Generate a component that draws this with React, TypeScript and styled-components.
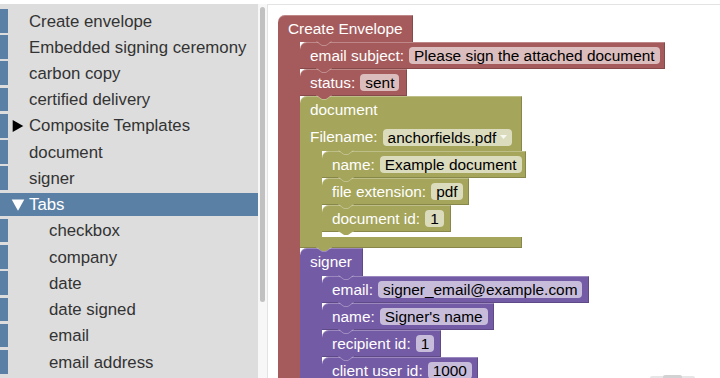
import React from "react";
import styled, { createGlobalStyle } from "styled-components";

type Hue = { base: string; field: string };

const red: Hue = { base: "#a55b5b", field: "#dbbdbd" };
const olive: Hue = { base: "#a5a55b", field: "#dbdbbd" };
const purple: Hue = { base: "#745ba5", field: "#c7bddb" };

const GlobalStyle = createGlobalStyle`
  html, body {
    margin: 0;
    padding: 0;
    background: #fff;
    overflow: hidden;
  }
`;

const Page = styled.div`
  display: flex;
  height: 100vh;
  padding-top: 4px;
  box-sizing: border-box;
  background: #fff;
  overflow: hidden;
`;

/* ---------- toolbox ---------- */

const Toolbox = styled.nav`
  width: 258px;
  flex: none;
  padding-top: 5px;
  box-sizing: border-box;
  background: #ddd;
  font-family: "Liberation Sans", Arial, sans-serif;
  font-size: 16.8px;
  color: #333;
  overflow: hidden;
`;

const TreeRow = styled.div<{ $depth: number; $selected?: boolean }>`
  display: flex;
  align-items: center;
  height: 23.6px;
  margin-bottom: 2.65px;
  padding-top: 1.5px;
  box-sizing: border-box;
  border-left: 8px solid #5b80a5;
  padding-left: ${({ $depth }) => 3 + $depth * 20}px;
  background: ${({ $selected }) => ($selected ? "#5b80a5" : "transparent")};
  color: ${({ $selected }) => ($selected ? "#fff" : "#333")};
  white-space: nowrap;
`;

const Twisty = styled.span`
  width: 18px;
  flex: none;
  display: flex;
  align-items: center;
`;

const ScrollTrack = styled.div`
  width: 9px;
  flex: none;
  padding: 3px 2px;
  box-sizing: border-box;
  background: #f7f7f7;
`;

const ScrollThumb = styled.div`
  height: 295px;
  border-radius: 3px;
  background: #c1c1c1;
`;

/* ---------- workspace ---------- */

const Workspace = styled.main`
  position: relative;
  flex: 1;
  padding: 10px 0 0 10px;
  border-top: 1px solid #e3e3e3;
  border-left: 1px solid #e3e3e3;
  background: #fff;
  overflow: hidden;
  font-family: "Liberation Sans", Arial, sans-serif;
  font-size: 15.4px;
`;

const Column = styled.div<{ $pad?: number }>`
  display: flex;
  flex-direction: column;
  align-items: flex-start;
  padding-bottom: ${({ $pad }) => $pad ?? 0}px;
`;

const Plain = styled.div<{ $c: string; $w: number }>`
  position: relative;
  display: flex;
  align-items: center;
  width: ${({ $w }) => $w}px;
  height: 27px;
  padding-left: 10px;
  box-sizing: border-box;
  border-radius: 7px 0 0 0;
  background: ${({ $c }) => $c};
  box-shadow: inset 0 1px 0 rgba(255, 255, 255, 0.28),
    inset -1px -1px 0 rgba(0, 0, 0, 0.18);
  color: #fff;
  white-space: nowrap;
`;

const CBlock = styled.div`
  display: flex;
  flex-direction: column;
  align-items: flex-start;
`;

const Head = styled.div<{ $c: string; $w: number }>`
  position: relative;
  display: flex;
  flex-direction: column;
  width: ${({ $w }) => $w}px;
  border-radius: 7px 0 0 0;
  background: ${({ $c }) => $c};
  box-shadow: inset 0 1px 0 rgba(255, 255, 255, 0.28),
    inset -1px 0 0 rgba(0, 0, 0, 0.18);
  color: #fff;
  white-space: nowrap;
`;

const Line = styled.div<{ $h?: number }>`
  display: flex;
  align-items: center;
  height: ${({ $h }) => $h ?? 27}px;
  padding-left: 10px;
`;

const Mouth = styled.div`
  display: flex;
  align-items: stretch;
`;

const Arm = styled.div<{ $c: string }>`
  width: 22px;
  flex: none;
  background: ${({ $c }) => $c};
`;

const Foot = styled.div<{ $c: string; $w: number }>`
  position: relative;
  width: ${({ $w }) => $w}px;
  height: 11px;
  background: ${({ $c }) => $c};
  box-shadow: inset -1px -1px 0 rgba(0, 0, 0, 0.18);
`;

const Field = styled.span<{ $bg: string }>`
  display: inline-flex;
  align-items: center;
  height: 17px;
  margin-left: 5px;
  padding: 0 5px;
  border-radius: 4px;
  background: ${({ $bg }) => $bg};
  color: #000;
  line-height: 17px;
`;

const Arrow = styled.svg`
  margin-left: 4px;
`;

const TabMark = styled.svg<{ $left: number }>`
  position: absolute;
  left: ${({ $left }) => $left}px;
  bottom: -4px;
  z-index: 2;
  overflow: visible;
`;

const TrashLid = styled.div`
  position: absolute;
  right: 25px;
  bottom: 0;
  display: flex;
  justify-content: center;
  align-items: flex-end;
  width: 45px;
  height: 3px;
`;

const LidBar = styled.div`
  width: 45px;
  height: 2px;
  border-radius: 2px 2px 0 0;
  background: #e6e6e6;
  display: flex;
  justify-content: center;
`;

const LidHandle = styled.div`
  width: 19px;
  height: 3px;
  margin-top: -1px;
  border-radius: 2px 2px 0 0;
  background: #d2d2d2;
`;

/* ---------- pieces ---------- */

const Tab = ({ color, left = 16 }: { color: string; left?: number }) => (
  <TabMark $left={left} width="16" height="5" viewBox="0 0 16 5">
    <path d="M0 0 L6 4 L10 4 L16 0 Z" fill={color} />
    <path
      d="M0.5 0.5 L6 4.5 L10 4.5 L15.5 0.5"
      fill="none"
      stroke="rgba(255,255,255,0.3)"
      strokeWidth="1"
    />
  </TabMark>
);

const Twist = ({ open, light }: { open: boolean; light?: boolean }) => (
  <svg width="14" height="12" viewBox="0 0 14 12">
    {open ? (
      <path d="M0.7 0.4 L13.3 0.4 L7 11.7 Z" fill={light ? "#fff" : "#000"} />
    ) : (
      <path d="M1.7 0 L12.3 6 L1.7 12 Z" fill={light ? "#fff" : "#000"} />
    )}
  </svg>
);

type Stmt = { hue: Hue; w: number; label: string; value: string };

const Statement = ({ hue, w, label, value }: Stmt) => (
  <Plain $c={hue.base} $w={w}>
    <span>{label}</span>
    <Field $bg={hue.field}>{value}</Field>
    <Tab color={hue.base} />
  </Plain>
);

const tree: { label: string; depth: number; twist?: "open" | "closed"; selected?: boolean }[] = [
  { label: "Create envelope", depth: 0 },
  { label: "Embedded signing ceremony", depth: 0 },
  { label: "carbon copy", depth: 0 },
  { label: "certified delivery", depth: 0 },
  { label: "Composite Templates", depth: 0, twist: "closed" },
  { label: "document", depth: 0 },
  { label: "signer", depth: 0 },
  { label: "Tabs", depth: 0, twist: "open", selected: true },
  { label: "checkbox", depth: 1 },
  { label: "company", depth: 1 },
  { label: "date", depth: 1 },
  { label: "date signed", depth: 1 },
  { label: "email", depth: 1 },
  { label: "email address", depth: 1 },
];

const docFields: Stmt[] = [
  { hue: olive, w: 204, label: "name:", value: "Example document" },
  { hue: olive, w: 147, label: "file extension:", value: "pdf" },
  { hue: olive, w: 129, label: "document id:", value: "1" },
];

const signerFields: Stmt[] = [
  { hue: purple, w: 267, label: "email:", value: "signer_email@example.com" },
  { hue: purple, w: 172, label: "name:", value: "Signer's name" },
  { hue: purple, w: 119, label: "recipient id:", value: "1" },
  { hue: purple, w: 156, label: "client user id:", value: "1000" },
];

export default function App() {
  return (
    <>
      <GlobalStyle />
      <Page>
        <Toolbox>
          {tree.map((item) => (
            <TreeRow key={item.label} $depth={item.depth} $selected={item.selected}>
              <Twisty>
                {item.twist && <Twist open={item.twist === "open"} light={item.selected} />}
              </Twisty>
              <span>{item.label}</span>
            </TreeRow>
          ))}
        </Toolbox>
        <ScrollTrack>
          <ScrollThumb />
        </ScrollTrack>
        <Workspace>
          <CBlock>
            <Head $c={red.base} $w={135}>
              <Line>Create Envelope</Line>
              <Tab color={red.base} left={38} />
            </Head>
            <Mouth>
              <Arm $c={red.base} />
              <Column>
                <Statement
                  hue={red}
                  w={365}
                  label="email subject:"
                  value="Please sign the attached document"
                />
                <Statement hue={red} w={107} label="status:" value="sent" />

                <CBlock>
                  <Head $c={olive.base} $w={222}>
                    <Line>document</Line>
                    <Line $h={28}>
                      <span>Filename:</span>
                      <Field $bg={olive.field}>
                        anchorfields.pdf
                        <Arrow width="7" height="4" viewBox="0 0 7 4">
                          <path d="M0 0 L7 0 L3.5 4 Z" fill="rgba(255,255,255,0.8)" />
                        </Arrow>
                      </Field>
                    </Line>
                    <Tab color={olive.base} left={38} />
                  </Head>
                  <Mouth>
                    <Arm $c={olive.base} />
                    <Column $pad={5}>
                      {docFields.map((f) => (
                        <Statement key={f.label} {...f} />
                      ))}
                    </Column>
                  </Mouth>
                  <Foot $c={olive.base} $w={222}>
                    <Tab color={olive.base} />
                  </Foot>
                </CBlock>

                <CBlock>
                  <Head $c={purple.base} $w={63}>
                    <Line $h={28}>signer</Line>
                    <Tab color={purple.base} left={38} />
                  </Head>
                  <Mouth>
                    <Arm $c={purple.base} />
                    <Column $pad={5}>
                      {signerFields.map((f) => (
                        <Statement key={f.label} {...f} />
                      ))}
                    </Column>
                  </Mouth>
                  <Foot $c={purple.base} $w={63} />
                </CBlock>
              </Column>
            </Mouth>
            <Foot $c={red.base} $w={135} />
          </CBlock>
          <TrashLid>
            <LidBar>
              <LidHandle />
            </LidBar>
          </TrashLid>
        </Workspace>
      </Page>
    </>
  );
}
